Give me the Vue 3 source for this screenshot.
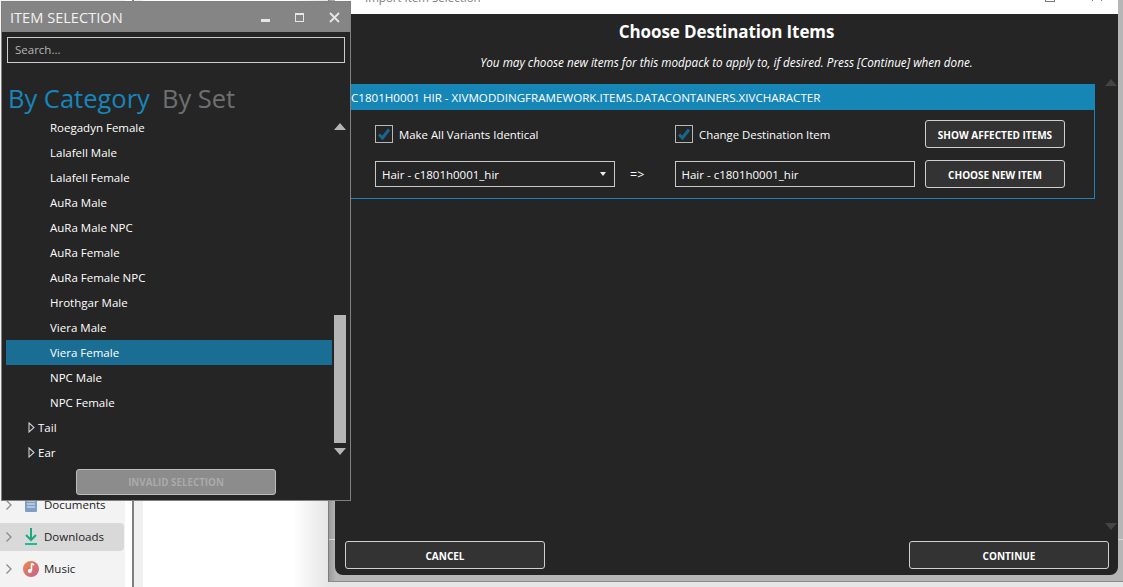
<script setup>
const races = ['Roegadyn Female','Lalafell Male','Lalafell Female','AuRa Male','AuRa Male NPC','AuRa Female','AuRa Female NPC','Hrothgar Male','Viera Male','Viera Female','NPC Male','NPC Female']
const groups = ['Tail','Ear']
</script>

<template>
  <div class="desktop">
    <aside class="sidebar">
      <div class="nav-row">
        <svg class="chev" width="8" height="12" viewBox="0 0 8 12"><path d="M1.5 1.5 6 6l-4.500 4.500" /></svg>
        <svg class="nav-icon" width="16" height="20" viewBox="0 0 16 20"><rect x="2" y="0" width="12" height="17" rx="1" fill="#7f9fc4"/><path d="M4 3h5M4 6h8M4 9h8M4 12h8" stroke="#e8eef6" stroke-width="1.200"/></svg>
        <span>Documents</span>
      </div>
      <div class="nav-row active">
        <svg class="chev" width="8" height="12" viewBox="0 0 8 12"><path d="M1.5 1.500 6 6l-4.500 4.500" /></svg>
        <svg class="nav-icon" width="16" height="20" viewBox="0 0 16 20"><path d="M8 1v12M3 8l5 5 5-5" fill="none" stroke="#1fa87f" stroke-width="2"/><path d="M2 17h12" stroke="#1fb9a0" stroke-width="2"/></svg>
        <span>Downloads</span>
      </div>
      <div class="nav-row">
        <svg class="chev" width="8" height="12" viewBox="0 0 8 12"><path d="M1.500 1.500 6 6l-4.500 4.500" /></svg>
        <svg class="nav-icon" width="16" height="20" viewBox="0 0 16 20">
          <defs><linearGradient id="mus" x1="0" y1="0" x2="1" y2="1"><stop offset="0" stop-color="#ea8a4c"/><stop offset="1" stop-color="#c45f90"/></linearGradient></defs>
          <circle cx="8" cy="10" r="8" fill="url(#mus)"/><path d="M8.500 4.500v7" stroke="#fff" stroke-width="1.500"/><circle cx="6.800" cy="12" r="2" fill="#fff"/><path d="M8.500 4.500l2.500 1.500" stroke="#fff" stroke-width="1.500"/>
        </svg>
        <span>Music</span>
      </div>
    </aside>
    <div class="gutter"></div>
    <div class="splitter"></div>
    <div class="pane-edge"></div>
    <div class="pane"></div>

    <section class="import-win">
      <span class="frame-line left"></span>
      <span class="frame-line right"></span>
      <header class="import-title">
        <svg width="11" height="11" viewBox="0 0 11 11" class="import-icon"><rect width="11" height="11" fill="#4a3560"/></svg>
        <span class="import-name">Import Item Selection</span>
        <span class="import-ctl max"></span>
        <svg class="import-ctl-x" width="12" height="12" viewBox="0 0 12 12"><path d="M1 1l10 10M11 1 1 11" stroke="#777" fill="none"/></svg>
      </header>
      <div class="import-body">
        <h1>Choose Destination Items</h1>
        <p class="sub">You may choose new items for this modpack to apply to, if desired. Press [Continue] when done.</p>
        <div class="card">
          <div class="card-head">C1801H0001 HIR - XIVMODDINGFRAMEWORK.ITEMS.DATACONTAINERS.XIVCHARACTER</div>
          <div class="card-grid">
            <label class="check c1">
              <span class="box"><svg width="16" height="16" viewBox="0 0 16 16"><path d="M3 8.500 6.500 12 13 3.500" fill="none" stroke="#16678f" stroke-width="3"/></svg></span>
              Make All Variants Identical
            </label>
            <label class="check c3">
              <span class="box"><svg width="16" height="16" viewBox="0 0 16 16"><path d="M3 8.500 6.500 12 13 3.500" fill="none" stroke="#16678f" stroke-width="3"/></svg></span>
              Change Destination Item
            </label>
            <button class="btn c5">SHOW AFFECTED ITEMS</button>
            <div class="field c1 select"><span>Hair - c1801h0001_hir</span><i class="caret"></i></div>
            <span class="arrow c2">=&gt;</span>
            <div class="field c3"><span>Hair - c1801h0001_hir</span></div>
            <button class="btn c5">CHOOSE NEW ITEM</button>
          </div>
        </div>
        <i class="tri up main-up"></i>
        <i class="tri down main-down"></i>
        <footer class="import-foot">
          <button class="btn wide">CANCEL</button>
          <button class="btn wide">CONTINUE</button>
        </footer>
      </div>
    </section>

    <section class="item-win">
      <header class="item-title">
        <span class="item-name">ITEM SELECTION</span>
        <span class="min"></span>
        <span class="maxi"></span>
        <svg class="close" width="11" height="11" viewBox="0 0 11 11"><path d="M1 1l9 9M10 1l-9 9" stroke="#e6e6e6" stroke-width="1.800" fill="none"/></svg>
      </header>
      <div class="search">Search...</div>
      <div class="tabs"><span class="tab on">By Category</span><span class="tab">By Set</span></div>
      <div class="tree-wrap">
        <ul class="tree">
          <li v-for="r in races" :key="r" class="leaf" :class="{ sel: r === 'Viera Female' }">{{ r }}</li>
          <li v-for="g in groups" :key="g" class="group">
            <svg width="7" height="11" viewBox="0 0 7 11"><path d="M1 1l5 4.500-5 4.500z" fill="none" stroke="#cfcfcf" stroke-width="1.100"/></svg>
            {{ g }}
          </li>
        </ul>
        <div class="vbar">
          <i class="tri up light"></i>
          <span class="thumb"></span>
          <i class="tri down light"></i>
        </div>
      </div>
      <div class="item-foot"><button class="btn invalid">INVALID SELECTION</button></div>
    </section>
  </div>
</template>

<style>
html, body { margin: 0; background: #fff; overflow: hidden; }
</style>

<style scoped>
* { box-sizing: border-box; }
.desktop {
  position: relative; width: 1123px; height: 587px; overflow: hidden; display: flex;
  font-family: "Open Sans", "Noto Sans", sans-serif; font-size: 11.5px; color: #fff;
}
.sidebar { width: 125px; background: #f3f3f3; padding-top: 491px; color: #1c1c1c; }
.nav-row { height: 28px; margin-bottom: 4px; margin-right: 1px; display: flex; align-items: center; padding-left: 5px; border-radius: 0 4px 4px 0; font-size: 11.5px; }
.nav-row span { margin-top: -2px; }
.nav-row.active { background: #d9d9d9; }
.chev { flex: none; fill: none; stroke: #8a8a8a; stroke-width: 1.300; margin-right: 10px; }
.nav-icon { flex: none; margin-right: 5px; }
.gutter { width: 7px; background: #fff; }
.splitter { width: 2px; background: #808080; }
.pane-edge { width: 9px; background: #f0f0f0; }
.pane { flex: 1; background: linear-gradient(to right, #fff 0, #fff 150px, #e6e6e6 185px, #e6e6e6 100%); }

.import-win {
  position: absolute; left: 328px; top: -16px; width: 795px; height: 598px;
  display: flex; flex-direction: column; padding: 0 5px 6px 6px;
  background: linear-gradient(to right, #9c9c9c, #b6b6b6 7px);
  border-left: 1px solid #7c7c7c; border-bottom: 1px solid #8a8a8a;
}
.frame-line { position: absolute; top: 555px; height: 1px; background: #d8d8d8; }
.frame-line.left { left: 0; width: 6px; }
.frame-line.right { right: 0; width: 5px; }
.import-title { height: 30px; flex: none; background: #fff; display: flex; align-items: center; position: relative; padding: 0 0 4px 30px; color: #7a7a7a; }
.import-icon { position: absolute; left: 11px; top: 4px; }
.import-name { font-size: 11.5px; }
.import-ctl.max { position: absolute; left: 710px; top: 8px; width: 10px; height: 10px; border: 1px solid #777; }
.import-ctl-x { position: absolute; left: 756px; top: 6px; }
.import-body { flex: 1; background: #252525; border-radius: 0 0 8px 8px; display: flex; flex-direction: column; position: relative; min-height: 0; }
h1 { margin: 6px 0 0; height: 24px; line-height: 24px; text-align: center; font-size: 17px; letter-spacing: -0.1px; font-weight: 700; }
.sub { margin: 8px 0 0; height: 20px; line-height: 20px; text-align: center; font-size: 11.7px; font-style: italic; }
.card { margin: 12px 23px 0 15px; border: 1px solid #1686b6; border-top: 0; }
.card-head { height: 26px; line-height: 27px; background: #1686b6; margin: 0 -1px; font-size: 11.6px; padding-left: 1px; }
.card-grid { display: grid; grid-template-columns: 240px 60px 240px 10px 140px; grid-auto-rows: 28px; row-gap: 12px; padding: 10px 0 10px 24px; align-items: center; }
.c1 { grid-column: 1; } .c2 { grid-column: 2; } .c3 { grid-column: 3; } .c5 { grid-column: 5; }
.check { display: flex; align-items: center; font-size: 11.4px; }
.box { width: 18px; height: 18px; border: 1px solid #b8b8b8; margin-right: 6px; display: flex; align-items: center; justify-content: center; }
.btn { font-family: inherit; color: #fff; background: #333; border: 1px solid #d0d0d0; border-radius: 3px; font-size: 10px; font-weight: 700; padding: 1px 0 0; height: 28px; }
.field { height: 26px; border: 1px solid #c8c8c8; display: flex; align-items: center; padding-left: 5.500px; font-size: 11.5px; justify-content: space-between; }
.select { padding-left: 6px; padding-right: 8px; }
.caret { width: 0; height: 0; border-left: 3px solid transparent; border-right: 3px solid transparent; border-top: 4px solid #eee; }
.arrow { padding-left: 15px; font-size: 12.5px; }
.tri { display: block; width: 0; height: 0; border-left: 6px solid transparent; border-right: 6px solid transparent; }
.tri.up { border-bottom: 7px solid #444; }
.tri.down { border-top: 7px solid #444; }
.main-up { position: absolute; right: 1px; top: 65px; }
.main-down { position: absolute; right: 1px; top: 509px; }
.import-foot { margin-top: auto; padding: 0 9px 6px 10px; display: flex; justify-content: space-between; }
.btn.wide { width: 200px; height: 28px; }

.item-win {
  position: absolute; left: 1px; top: 1px; width: 350px; height: 500px;
  background: #252525; border: 1px solid #808080; display: flex; flex-direction: column;
}
.item-title { height: 30px; flex: none; background: #858585; position: relative; display: flex; align-items: center; padding-left: 8px; }
.item-name { font-size: 14.6px; color: #f2f2f2; }
.min { position: absolute; left: 259px; top: 17px; width: 9px; height: 3px; background: #e6e6e6; }
.maxi { position: absolute; left: 293px; top: 11px; width: 9px; height: 9px; border: 1px solid #e6e6e6; border-top-width: 2px; }
.close { position: absolute; left: 327px; top: 10px; }
.search { margin: 5px 5px 0; height: 26px; flex: none; border: 1px solid #cdcdcd; padding-left: 7px; line-height: 24px; font-size: 11.5px; color: #b5b5b5; }
.tabs { height: 30px; margin-top: 20px; flex: none; display: flex; gap: 12px; padding-left: 6px; align-items: center; font-size: 25.5px; }
.tab { color: #6f6f6f; line-height: 30px; }
.tab.on { color: #1686bc; }
.tree-wrap { flex: none; display: flex; height: 350px; padding-left: 4px; margin-top: 2px; }
.tree { list-style: none; margin: 0; padding: 0; width: 326px; font-size: 11.5px; }
.tree li { height: 25px; display: flex; align-items: center; }
.leaf { padding-left: 44px; }
.leaf.sel { background: #1a6e94; }
.group { padding-left: 22px; gap: 3px; }
.vbar { width: 12px; margin-left: 2px; display: flex; flex-direction: column; align-items: center; padding-top: 8px; }
.tri.light.up { border-bottom-color: #b5b5b5; }
.tri.light.down { border-top-color: #b5b5b5; margin-top: 5px; }
.thumb { width: 12px; height: 128px; background: #b5b5b5; margin-top: 185px; }
.item-foot { flex: 1; display: flex; justify-content: center; padding-top: 4px; }
.btn.invalid { width: 200px; height: 26px; background: #8c8c8c; border-color: #bdbdbd; color: #aaa; font-size: 9.8px; }
</style>
